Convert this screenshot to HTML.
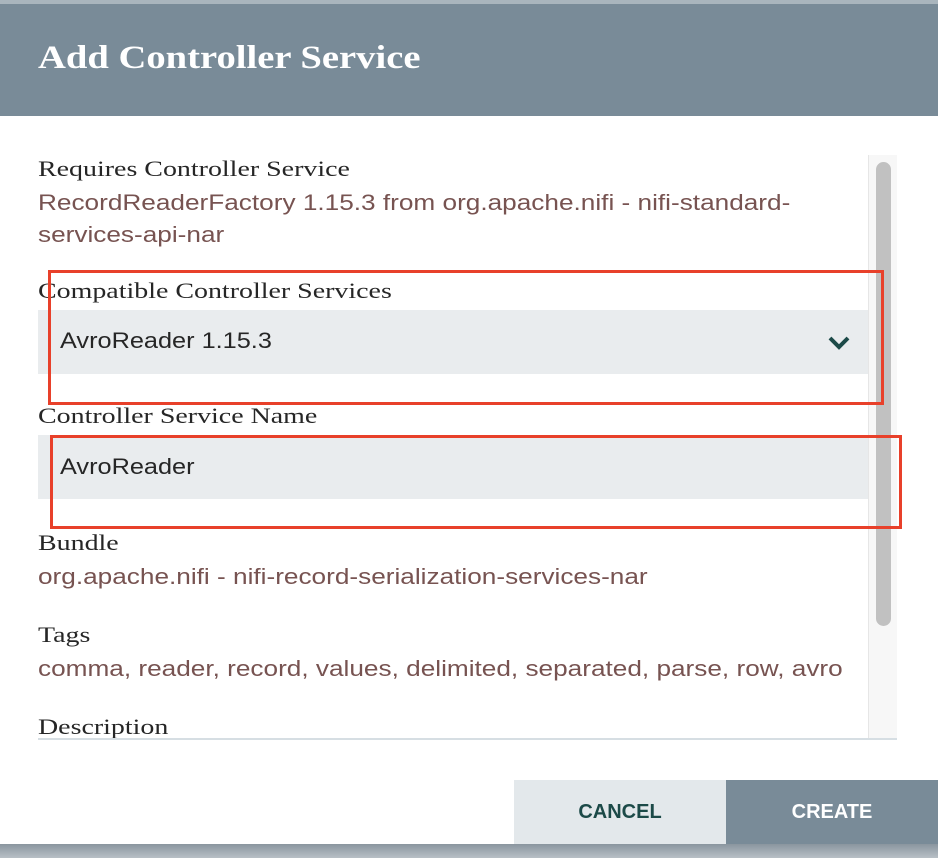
<!DOCTYPE html>
<html><head><style>
body{margin:0;width:938px;height:858px;overflow:hidden;background:#fff;position:relative;font-family:"Liberation Sans",sans-serif}
.a{position:absolute}
.lbl{font-family:"Liberation Serif",serif;font-size:22px;color:#262626;position:absolute;left:38px;white-space:nowrap;transform:scaleX(1.27);transform-origin:left}
.val{font-size:22px;color:#775351;position:absolute;left:38px;white-space:nowrap;line-height:32px;transform:scaleX(1.19);transform-origin:left}
</style></head><body>
<div class="a" style="left:0;top:0;width:938px;height:4px;background:#a9b5bd"></div>
<div class="a" style="left:0;top:4px;width:938px;height:112px;background:#798b98"></div>
<div class="a" style="left:38px;top:40px;font-family:'Liberation Serif',serif;font-weight:bold;font-size:33px;color:#fff;white-space:nowrap;transform:scaleX(1.17);transform-origin:left">Add Controller Service</div>

<div class="lbl" style="top:156px">Requires Controller Service</div>
<div class="val" style="top:187px">RecordReaderFactory 1.15.3 from org.apache.nifi - nifi-standard-<br>services-api-nar</div>

<div class="lbl" style="top:278px">Compatible Controller Services</div>
<div class="a" style="left:38px;top:310px;width:830px;height:64px;background:#e9ecee"></div>
<div class="a" style="left:60px;top:328px;font-size:22px;color:#262626;white-space:nowrap;transform:scaleX(1.15);transform-origin:left">AvroReader 1.15.3</div>
<svg class="a" style="left:827px;top:334px" width="24" height="18" viewBox="0 0 24 18"><path d="M3 4 L12 13 L21 4" fill="none" stroke="#1c4a48" stroke-width="4"/></svg>

<div class="lbl" style="top:403px">Controller Service Name</div>
<div class="a" style="left:38px;top:435px;width:830px;height:64px;background:#e9ecee"></div>
<div class="a" style="left:60px;top:454px;font-size:22px;color:#262626;white-space:nowrap;transform:scaleX(1.15);transform-origin:left">AvroReader</div>

<div class="lbl" style="top:530px">Bundle</div>
<div class="val" style="top:561px">org.apache.nifi - nifi-record-serialization-services-nar</div>
<div class="lbl" style="top:622px">Tags</div>
<div class="val" style="top:653px">comma, reader, record, values, delimited, separated, parse, row, avro</div>
<div class="lbl" style="top:714px">Description</div>

<div class="a" style="left:868px;top:155px;width:29px;height:585px;background:#f7f7f7;border-left:1px solid #e6e6e6;box-sizing:border-box"></div>
<div class="a" style="left:876px;top:162px;width:15px;height:464px;background:#c1c1c1;border-radius:8px"></div>
<div class="a" style="left:38px;top:738px;width:859px;height:2px;background:#d6dee3"></div>

<div class="a" style="left:48px;top:270px;width:830px;height:129px;border:3px solid #e8402a"></div>
<div class="a" style="left:50px;top:435px;width:846px;height:88px;border:3px solid #e8402a"></div>

<div class="a" style="left:514px;top:780px;width:212px;height:64px;background:#e3e8eb;color:#1c4a48;font-size:20px;font-weight:bold;text-align:center;line-height:64px">CANCEL</div>
<div class="a" style="left:726px;top:780px;width:212px;height:64px;background:#798b98;color:#fff;font-size:20px;font-weight:bold;text-align:center;line-height:64px">CREATE</div>
<div class="a" style="left:0;top:844px;width:938px;height:14px;background:linear-gradient(#8a969f,#b8c0c6)"></div>
</body></html>
